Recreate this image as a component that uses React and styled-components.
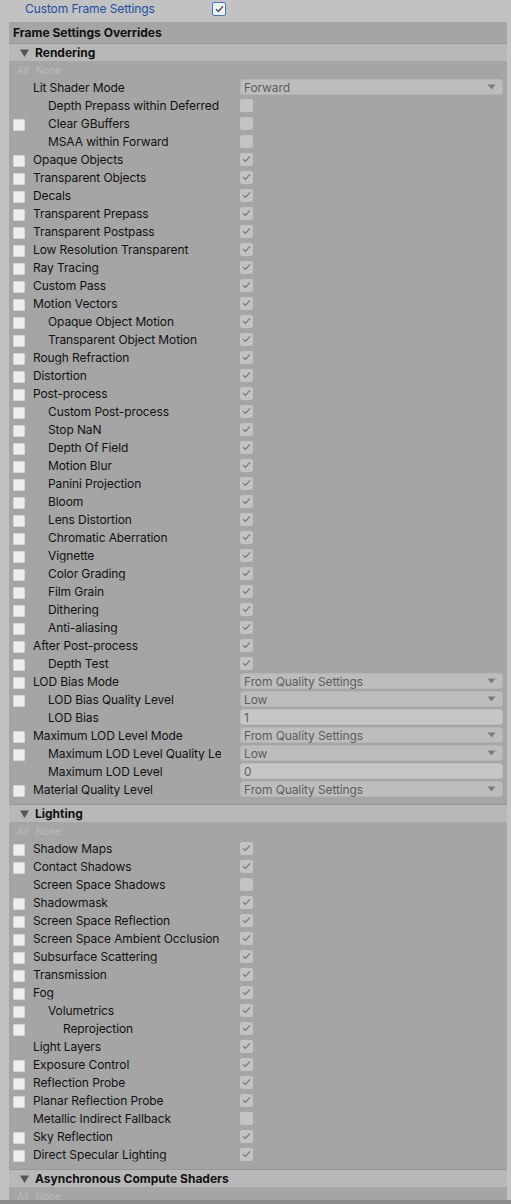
import React from "react";
import styled, { createGlobalStyle } from "styled-components";

const GlobalStyle = createGlobalStyle`
  html, body {
    margin: 0;
    padding: 0;
    background: #c2c2c2;
    font-family: Inter, "Noto Sans", "Liberation Sans", sans-serif;
    font-size: 12px;
    color: #101010;
  }
  * { box-sizing: border-box; }
`;

const rendering = [
  { name: "Lit Shader Mode", level: 0, cb: false, type: "dropdown", value: "Forward" },
  { name: "Depth Prepass within Deferred", level: 1, cb: false, type: "check", on: false },
  { name: "Clear GBuffers", level: 1, cb: true, type: "check", on: false },
  { name: "MSAA within Forward", level: 1, cb: false, type: "check", on: false },
  { name: "Opaque Objects", level: 0, cb: true, type: "check", on: true },
  { name: "Transparent Objects", level: 0, cb: true, type: "check", on: true },
  { name: "Decals", level: 0, cb: true, type: "check", on: true },
  { name: "Transparent Prepass", level: 0, cb: true, type: "check", on: true },
  { name: "Transparent Postpass", level: 0, cb: true, type: "check", on: true },
  { name: "Low Resolution Transparent", level: 0, cb: true, type: "check", on: true },
  { name: "Ray Tracing", level: 0, cb: true, type: "check", on: true },
  { name: "Custom Pass", level: 0, cb: true, type: "check", on: true },
  { name: "Motion Vectors", level: 0, cb: true, type: "check", on: true },
  { name: "Opaque Object Motion", level: 1, cb: true, type: "check", on: true },
  { name: "Transparent Object Motion", level: 1, cb: true, type: "check", on: true },
  { name: "Rough Refraction", level: 0, cb: true, type: "check", on: true },
  { name: "Distortion", level: 0, cb: true, type: "check", on: true },
  { name: "Post-process", level: 0, cb: true, type: "check", on: true },
  { name: "Custom Post-process", level: 1, cb: true, type: "check", on: true },
  { name: "Stop NaN", level: 1, cb: true, type: "check", on: true },
  { name: "Depth Of Field", level: 1, cb: true, type: "check", on: true },
  { name: "Motion Blur", level: 1, cb: true, type: "check", on: true },
  { name: "Panini Projection", level: 1, cb: true, type: "check", on: true },
  { name: "Bloom", level: 1, cb: true, type: "check", on: true },
  { name: "Lens Distortion", level: 1, cb: true, type: "check", on: true },
  { name: "Chromatic Aberration", level: 1, cb: true, type: "check", on: true },
  { name: "Vignette", level: 1, cb: true, type: "check", on: true },
  { name: "Color Grading", level: 1, cb: true, type: "check", on: true },
  { name: "Film Grain", level: 1, cb: true, type: "check", on: true },
  { name: "Dithering", level: 1, cb: true, type: "check", on: true },
  { name: "Anti-aliasing", level: 1, cb: true, type: "check", on: true },
  { name: "After Post-process", level: 0, cb: true, type: "check", on: true },
  { name: "Depth Test", level: 1, cb: true, type: "check", on: true },
  { name: "LOD Bias Mode", level: 0, cb: true, type: "dropdown", value: "From Quality Settings" },
  { name: "LOD Bias Quality Level", level: 1, cb: true, type: "dropdown", value: "Low" },
  { name: "LOD Bias", level: 1, cb: false, type: "text", value: "1" },
  { name: "Maximum LOD Level Mode", level: 0, cb: true, type: "dropdown", value: "From Quality Settings" },
  { name: "Maximum LOD Level Quality Level", level: 1, cb: true, type: "dropdown", value: "Low" },
  { name: "Maximum LOD Level", level: 1, cb: false, type: "text", value: "0" },
  { name: "Material Quality Level", level: 0, cb: true, type: "dropdown", value: "From Quality Settings" },
];

const lighting = [
  { name: "Shadow Maps", level: 0, cb: true, type: "check", on: true },
  { name: "Contact Shadows", level: 0, cb: true, type: "check", on: true },
  { name: "Screen Space Shadows", level: 0, cb: false, type: "check", on: false },
  { name: "Shadowmask", level: 0, cb: true, type: "check", on: true },
  { name: "Screen Space Reflection", level: 0, cb: true, type: "check", on: true },
  { name: "Screen Space Ambient Occlusion", level: 0, cb: true, type: "check", on: true },
  { name: "Subsurface Scattering", level: 0, cb: true, type: "check", on: true },
  { name: "Transmission", level: 0, cb: true, type: "check", on: true },
  { name: "Fog", level: 0, cb: true, type: "check", on: true },
  { name: "Volumetrics", level: 1, cb: true, type: "check", on: true },
  { name: "Reprojection", level: 2, cb: true, type: "check", on: true },
  { name: "Light Layers", level: 0, cb: false, type: "check", on: true },
  { name: "Exposure Control", level: 0, cb: true, type: "check", on: true },
  { name: "Reflection Probe", level: 0, cb: true, type: "check", on: true },
  { name: "Planar Reflection Probe", level: 0, cb: true, type: "check", on: true },
  { name: "Metallic Indirect Fallback", level: 0, cb: false, type: "check", on: false },
  { name: "Sky Reflection", level: 0, cb: true, type: "check", on: true },
  { name: "Direct Specular Lighting", level: 0, cb: true, type: "check", on: true },
];

const CheckMark = ({ color }) => (
  <svg width="9" height="8" viewBox="0 0 9 8">
    <path d="M1 4.2 L3.4 6.4 L8 1.4" fill="none" stroke={color} strokeWidth="1.3" />
  </svg>
);

const Arrow = () => (
  <svg width="9" height="6" viewBox="0 0 9 6">
    <path d="M0.5 0.5 H8.5 L4.5 5.5 Z" fill="#7c7c7c" />
  </svg>
);

const FoldArrow = () => (
  <svg width="9" height="8" viewBox="0 0 9 8">
    <path d="M0 0.5 H9 L4.5 8 Z" fill="#555" />
  </svg>
);

const Row = ({ item }) => (
  <RowWrap>
    <OverrideSlot>{item.cb && <OverrideBox />}</OverrideSlot>
    <Label level={item.level}>{item.name}</Label>
    <Value>
      {item.type === "check" && (
        <ValueBox>{item.on && <CheckMark color="#7a7a7a" />}</ValueBox>
      )}
      {item.type === "dropdown" && (
        <Dropdown>
          <span>{item.value}</span>
          <Arrow />
        </Dropdown>
      )}
      {item.type === "text" && <TextField>{item.value}</TextField>}
    </Value>
  </RowWrap>
);

const Section = ({ title, items }) => (
  <SectionWrap>
    <Foldout>
      <FoldArrow />
      <FoldTitle>{title}</FoldTitle>
    </Foldout>
    <AllNone>
      <span>All</span>
      <span>None</span>
    </AllNone>
    {items.map((item) => (
      <Row key={item.name} item={item} />
    ))}
  </SectionWrap>
);

const App = () => {
  return (
    <Page>
      <GlobalStyle />
      <Content>
        <TopRow>
          <TopLabel>Custom Frame Settings</TopLabel>
          <TopBox>
            <CheckMark color="#3a3a3a" />
          </TopBox>
        </TopRow>
        <Panel>
          <PanelHeader>Frame Settings Overrides</PanelHeader>
          <Section title="Rendering" items={rendering} />
          <Section title="Lighting" items={lighting} />
          <Section title="Asynchronous Compute Shaders" items={[]} />
        </Panel>
      </Content>
      <BottomBar />
    </Page>
  );
};

const Page = styled.div`
  height: 1204px;
  display: flex;
  flex-direction: column;
  overflow: hidden;
`;

const Content = styled.div`
  flex: 1;
  overflow: hidden;
`;

const BottomBar = styled.div`
  height: 4px;
  background: #8b8b8b;
`;

const TopRow = styled.div`
  height: 22px;
  display: flex;
  align-items: flex-start;
  padding: 2px 0 0 25px;
`;

const TopLabel = styled.div`
  width: 187px;
  line-height: 14px;
  color: #1c4fa3;
  font-size: 12px;
  letter-spacing: -0.1px;
`;

const TopBox = styled.div`
  width: 14px;
  height: 14px;
  border: 1px solid #3b78d8;
  border-radius: 2px;
  background: #f2f2f2;
  display: flex;
  align-items: center;
  justify-content: center;
`;

const Panel = styled.div`
  margin: 0 4px 0 9px;
  background: #a5a5a5;
`;

const PanelHeader = styled.div`
  height: 22px;
  display: flex;
  align-items: center;
  padding-left: 4px;
  font-weight: bold;
  font-size: 12px;
  border-bottom: 1px solid #969696;
`;

const SectionWrap = styled.div`
  padding-bottom: 6px;
  & + & {
    border-top: 1px solid #969696;
  }
`;

const Foldout = styled.div`
  height: 17px;
  display: flex;
  align-items: center;
  gap: 6px;
  padding-left: 11px;
  background: #b8b8b8;
`;

const FoldTitle = styled.span`
  font-weight: bold;
  font-size: 12px;
  color: #111;
`;

const AllNone = styled.div`
  height: 17px;
  display: flex;
  align-items: center;
  gap: 7px;
  padding-left: 8px;
  font-size: 10px;
  color: #bababa;
`;

const RowWrap = styled.div`
  height: 18px;
  display: flex;
  align-items: center;
`;

const OverrideSlot = styled.div`
  width: 24px;
  padding-left: 4px;
  display: flex;
  align-items: center;
  padding-top: 3px;
`;

const OverrideBox = styled.div`
  width: 12px;
  height: 12px;
  background: #eeeeee;
  border: 1px solid #d4d4d4;
  border-radius: 1px;
`;

const Label = styled.div`
  width: 207px;
  padding-left: ${(p) => p.level * 15}px;
  white-space: nowrap;
  overflow: hidden;
  font-size: 12px;
  letter-spacing: -0.1px;
  color: #111;
  clip-path: inset(0 19px 0 0);
`;

const Value = styled.div`
  flex: 1;
  padding-right: 4px;
  display: flex;
  align-items: center;
`;

const ValueBox = styled.div`
  width: 13px;
  height: 13px;
  background: #c3c3c3;
  border-radius: 2px;
  display: flex;
  align-items: center;
  justify-content: center;
`;

const Dropdown = styled.div`
  flex: 1;
  height: 16px;
  background: #bdbdbd;
  border: 1px solid #b5b5b5;
  border-radius: 3px;
  display: flex;
  align-items: center;
  justify-content: space-between;
  padding: 0 6px 0 3px;
  color: #5e5e5e;
  font-size: 12px;
  letter-spacing: -0.1px;
`;

const TextField = styled.div`
  flex: 1;
  height: 16px;
  background: #c6c6c6;
  border: 1px solid #bdbdbd;
  border-radius: 3px;
  display: flex;
  align-items: center;
  padding-left: 3px;
  color: #5e5e5e;
  font-size: 12px;
`;

export default App;
